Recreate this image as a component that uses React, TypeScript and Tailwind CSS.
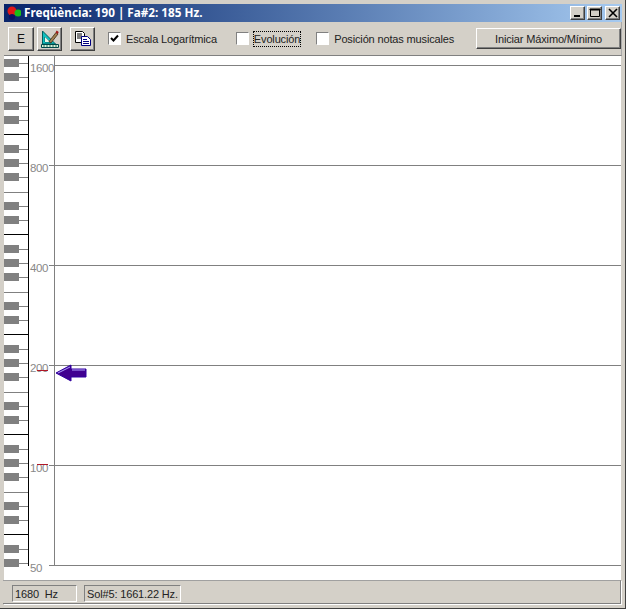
import React from 'react';

const ui = "font-['Liberation_Sans',Arial,sans-serif]";
const raised =
  'border border-t-white border-l-white border-r-[#404040] border-b-[#404040] shadow-[inset_-1px_-1px_0_#808080] bg-[#d4d0c8]';
const sunken = 'border border-t-[#808080] border-l-[#808080] border-r-white border-b-white';
const label = 'text-[11px] tracking-[-0.15px] leading-[14px] text-[#222] whitespace-pre';

const octaves = [34, 134, 234, 334, 434, 534];
const guides = [
  { y: 65, label: '1600' },
  { y: 165, label: '800' },
  { y: 265, label: '400' },
  { y: 365, label: '200' },
  { y: 465, label: '100' },
  { y: 565, label: '50' },
];

const WinButton = ({ children }: { children: React.ReactNode }) => (
  <div className={`w-[15px] h-[14px] flex items-center justify-center ${raised}`}>
    <svg width="12" height="10" viewBox="0 0 12 10">{children}</svg>
  </div>
);

const Check = ({ checked, text, dotted }: { checked?: boolean; text: string; dotted?: boolean }) => (
  <div className="flex items-center gap-[5px]">
    <div className={`w-[13px] h-[13px] bg-white flex items-center justify-center ${sunken}`}>
      {checked && (
        <svg width="9" height="9" viewBox="0 0 9 9">
          <path d="M1 4l2.5 2.5L8 1.5" fill="none" stroke="#000" strokeWidth="2" />
        </svg>
      )}
    </div>
    <span className={`${label} ${dotted ? 'outline-1 outline-dotted outline-black' : ''}`}>{text}</span>
  </div>
);

const SetSquareIcon = () => (
  <svg width="20" height="20" viewBox="0 0 20 20">
    <path d="M2.5 2v13h13z M5 8v5h5z" fill="#10c0c0" fillRule="evenodd" stroke="#006060" />
    <path d="M5 8v5h5z" fill="#e8f8e8" />
    <path d="M1.5 15.5h17v3h-17z" fill="#d8f4d8" stroke="#004848" />
    <path d="M4 16v2M7 16v2M10 16v2M13 16v2M16 16v2" stroke="#004848" strokeWidth="0.8" />
    <path d="M9 12.5l7-9 2 1.5-7 9z" fill="#a08050" stroke="#402810" strokeWidth="0.8" />
    <path d="M15.5 3.5l1.2-2 2 1.5-.8 2z" fill="#a01818" />
  </svg>
);

const CopyIcon = () => (
  <svg width="18" height="17" viewBox="0 0 18 17">
    <path d="M1.5 1.5h7l2 2v9h-9z" fill="#fff" stroke="#000" />
    <path d="M3 4h5M3 6h5M3 8h4" stroke="#000" />
    <path d="M7.5 6.5h6l3 3v6h-9z" fill="#fff" stroke="#000080" />
    <path d="M9 9.5h4M9 11.5h6M9 13.5h6" stroke="#000080" />
  </svg>
);

const Chart = () => (
  <svg className="block w-[617px] h-[524px]" viewBox="4 56 617 524">
    <rect x="4" y="56" width="617" height="524" fill="#fff" />
    {octaves.map((y) => (
      <g key={y}>
        <path d={`M4 ${y + 0.5}h24`} stroke="#000" />
        {y + 58 < 566 && <path d={`M4 ${y + 58.5}h24`} stroke="#808080" />}
        {[11, 25, 39, 68, 82]
          .filter((o) => y + o < 560)
          .map((o) => (
            <g key={o}>
              <rect x="4" y={y + o} width="15" height="8" fill="#808080" />
              <path d={`M19 ${y + o + 4.5}h9`} stroke="#808080" />
            </g>
          ))}
      </g>
    ))}
    <path d="M28.5 56v510" stroke="#000" />
    <path d="M54.5 56v510" stroke="#808080" />
    {guides.map((g) => (
      <g key={g.label}>
        <path d={`M49 ${g.y + 0.5}H621`} stroke="#808080" />
        <rect x="30" y={g.y - 3} width={g.label === '1600' ? 24 : g.label === '50' ? 14 : 19} height="11" fill="#fff" />
        <text x="30" y={g.y + 6.5} fontSize="11.5" letterSpacing="-0.4" fill="#888888" fontFamily="Liberation Sans, Arial, sans-serif">
          {g.label}
        </text>
      </g>
    ))}
    <path d="M37 370.5h11M37 464.5h11" stroke="#b01828" />
    <path d="M56 373l15-8v4h15v8H71v4z" fill="#400090" stroke="#3000a0" />
    <path d="M58 373l12-6M72 370h13" stroke="#b0a0ff" />
  </svg>
);

export default function App() {
  return (
    <div className={`w-[626px] h-[609px] bg-[#d4d0c8] border-r border-b border-r-[#404040] border-b-[#404040] flex flex-col overflow-hidden ${ui}`}>
      <div className="h-[4px] shrink-0" />
      <div className="ml-[4px] mr-[3px] h-[18px] shrink-0 flex items-center justify-between bg-gradient-to-r from-[#0a246a] to-[#a6caf0]">
        <div className="flex items-center gap-[3px] pl-[1px]">
          <svg width="16" height="16" viewBox="0 0 16 16">
            <circle cx="7" cy="6" r="4.5" fill="#e01818" />
            <circle cx="13" cy="8" r="3.5" fill="#18c018" />
            <circle cx="7" cy="12" r="3" fill="#101060" />
          </svg>
          <span className="font-['Noto_Sans',sans-serif] font-bold text-[11.7px] text-white whitespace-nowrap">
            Freqüència: 190 | Fa#2: 185 Hz.
          </span>
        </div>
        <div className="flex items-center gap-[2px] pr-[2px]">
          <WinButton>
            <path d="M2 7h6v2H2z" fill="#000" />
          </WinButton>
          <WinButton>
            <path d="M1.5 1.5h9v7h-9z M1 1h10v1H1z" fill="none" stroke="#000" />
          </WinButton>
          <div className="ml-[1px]">
            <WinButton>
              <path d="M2 1l8 8M10 1L2 9" stroke="#000" strokeWidth="1.6" />
            </WinButton>
          </div>
        </div>
      </div>
      <div className="ml-[4px] mr-[3px] h-[34px] shrink-0 flex items-center pl-[4px] border-b border-r border-b-[#808080] border-r-[#a8a8a8]">
        <div className={`w-[26px] h-[24px] flex items-center justify-center text-[12px] text-[#111] ${raised}`}>E</div>
        <div className={`ml-[3px] w-[25px] h-[24px] flex items-center justify-center ${raised}`}>
          <SetSquareIcon />
        </div>
        <div className={`ml-[8px] w-[25px] h-[24px] flex items-center justify-center ${raised}`}>
          <CopyIcon />
        </div>
        <div className="ml-[13px]">
          <Check checked text="Escala Logarítmica" />
        </div>
        <div className="ml-[19px]">
          <Check text="Evolución" dotted />
        </div>
        <div className="ml-[16px]">
          <Check text="Posición notas musicales" />
        </div>
        <div className={`ml-auto w-[145px] h-[21px] flex items-center justify-center ${label} ${raised}`}>
          Iniciar Máximo/Mínimo
        </div>
      </div>
      <div className="ml-[4px] h-[524px] shrink-0">
        <Chart />
      </div>
      <div className="ml-[3px] mr-[4px] h-[24px] shrink-0 flex items-start gap-[7px] pl-[9px] pt-[4px] border-t border-r border-b border-t-[#a0a0a0] border-r-[#808080] border-b-[#808080] shadow-[1px_1px_0_#fff]">
        <div className={`w-[65px] h-[17px] px-[2px] flex items-center ${label} ${sunken}`}>1680  Hz</div>
        <div className={`w-[97px] h-[17px] px-[2px] flex items-center ${label} ${sunken}`}>Sol#5: 1661.22 Hz.</div>
      </div>
    </div>
  );
}
